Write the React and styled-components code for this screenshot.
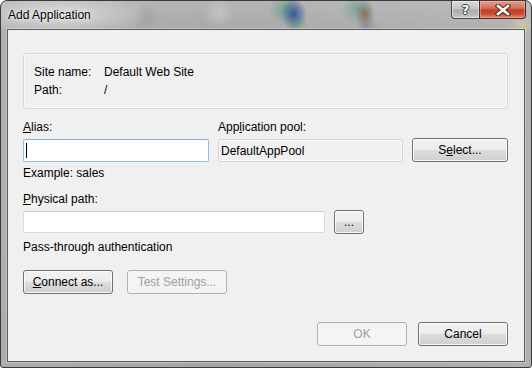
import React from 'react';
import styled, { createGlobalStyle } from 'styled-components';

const Global = createGlobalStyle`
  html, body { margin: 0; padding: 0; background: #fff; }
  body {
    font-family: "Liberation Sans", Arial, sans-serif;
    font-size: 12px;
    color: #000;
  }
  #root { width: 532px; height: 368px; }
`;

const Window = styled.div`
  box-sizing: border-box;
  width: 532px;
  height: 368px;
  display: flex;
  flex-direction: column;
  border: 1px solid #3a3a3a;
  border-radius: 7px 7px 3px 3px;
  overflow: hidden;
  background:
    radial-gradient(90px 22px at 60px 14px, rgba(255,255,255,0.55), rgba(255,255,255,0) 100%),
    radial-gradient(13px 16px at 293px 13px, rgba(30,70,150,0.8), rgba(30,70,150,0) 100%),
    radial-gradient(16px 16px at 284px 8px, rgba(60,150,110,0.55), rgba(60,150,110,0) 100%),
    radial-gradient(12px 10px at 296px 24px, rgba(90,170,90,0.4), rgba(90,170,90,0) 100%),
    radial-gradient(10px 14px at 364px 13px, rgba(120,85,55,0.65), rgba(120,85,55,0) 100%),
    radial-gradient(16px 16px at 356px 8px, rgba(60,150,130,0.45), rgba(60,150,130,0) 100%),
    radial-gradient(12px 10px at 366px 25px, rgba(80,110,150,0.35), rgba(80,110,150,0) 100%),
    radial-gradient(16px 16px at 218px 12px, rgba(225,225,225,0.4), rgba(225,225,225,0) 100%),
    radial-gradient(14px 14px at 145px 16px, rgba(135,135,135,0.3), rgba(135,135,135,0) 100%),
    radial-gradient(16px 10px at 522px 24px, rgba(230,220,150,0.45), rgba(230,220,150,0) 100%),
    linear-gradient(90deg, rgba(255,255,255,0.08), rgba(255,255,255,0) 40%, rgba(255,255,255,0.1)),
    linear-gradient(#b4b4b4, #a9a9a9 28px, #a6a6a6);
`;

const TitleBar = styled.div`
  height: 28px;
  flex: none;
  display: flex;
  align-items: flex-start;
  padding: 0 5px 0 7px;
`;

const Title = styled.div`
  padding-top: 6px;
  line-height: 16px;
  font-size: 12px;
  color: #000;
  text-shadow: 0 0 6px rgba(255,255,255,0.9), 0 0 2px rgba(255,255,255,0.7);
`;

const Spacer = styled.div`
  flex: 1;
`;

const CaptionButtons = styled.div`
  display: flex;
`;

const HelpButton = styled.div`
  box-sizing: border-box;
  width: 28px;
  height: 18px;
  display: flex;
  align-items: center;
  justify-content: center;
  border: 1px solid #4a4a4a;
  border-top: none;
  border-right: none;
  border-radius: 0 0 0 4px;
  background: linear-gradient(#d9d9d9, #c6c6c6 45%, #ababab 52%, #bcbcbc 85%, #d0d0d0);
  box-shadow: inset 0 0 0 1px rgba(255,255,255,0.45);
  color: #fff;
  font-family: "DejaVu Sans", sans-serif;
  font-weight: bold;
  font-size: 13px;
  line-height: 13px;
  text-shadow: 1px 0 0 #3c3c3c, -1px 0 0 #3c3c3c, 0 1px 0 #3c3c3c, 0 -1px 0 #3c3c3c;
`;

const CloseButton = styled.div`
  box-sizing: border-box;
  width: 47px;
  height: 18px;
  display: flex;
  align-items: center;
  justify-content: center;
  border: 1px solid #4a2b25;
  border-top: none;
  border-radius: 0 0 4px 0;
  background: linear-gradient(#e3a091, #d46f5b 42%, #c23f28 52%, #c9492f 75%, #df8a6d);
  box-shadow: inset 0 0 0 1px rgba(255,220,210,0.35);
`;

const Client = styled.div`
  flex: 1;
  display: flex;
  flex-direction: column;
  margin: 0 6px 5px 6px;
  padding: 23px 16px 15px 15px;
  border: 1px solid #5a5a5a;
  background: #f0f0f0;
  box-shadow: 0 0 0 1px rgba(255,255,255,0.3);
`;

const InfoBox = styled.div`
  box-sizing: border-box;
  height: 56px;
  padding: 9px 10px 9px 10px;
  border: 1px solid #d5d8da;
  border-radius: 3px;
  box-shadow: inset 0 0 0 1px #f9f9f9;
  display: grid;
  grid-template-columns: 70px 1fr;
  line-height: 18px;
`;

const FieldGrid = styled.div`
  margin-top: 10px;
  display: grid;
  grid-template-columns: 186px 185px 1fr;
  column-gap: 9px;
  row-gap: 3px;
  align-items: end;
`;

const Label = styled.div`
  line-height: 16px;
  margin-top: ${p => p.$mt || 0}px;
  color: ${p => (p.$disabled ? '#a0a0a0' : '#000')};
`;

const TextBox = styled.div`
  box-sizing: border-box;
  height: ${p => p.$h || 23}px;
  width: ${p => (p.$w ? `${p.$w}px` : 'auto')};
  display: flex;
  align-items: center;
  padding-left: 2px;
  border: 1px solid ${p => (p.$focused ? '#98bde3' : p.$readonly ? '#d6d6d6' : '#d8dbe0')};
  border-top-color: ${p => (p.$focused ? '#88b0dc' : p.$readonly ? '#d6d6d6' : '#c9ccd1')};
  border-radius: 2px;
  background: ${p => (p.$readonly ? '#f0f0f0' : '#fff')};
  box-shadow: ${p => (p.$readonly ? 'inset 0 0 0 1px #fafafa' : 'none')};
`;

const Caret = styled.span`
  display: block;
  width: 1px;
  height: 15px;
  background: #000;
`;

const Button = styled.div`
  box-sizing: border-box;
  width: ${p => p.$w}px;
  height: 24px;
  display: flex;
  align-items: center;
  justify-content: center;
  border: 1px solid ${p => (p.$disabled ? '#adb2b5' : '#707070')};
  border-radius: 3px;
  color: ${p => (p.$disabled ? '#a0a0a0' : '#000')};
  background: ${p =>
    p.$disabled
      ? '#f4f4f4'
      : 'linear-gradient(#f2f2f2 0%, #ebebeb 50%, #dddddd 51%, #cfcfcf 100%)'};
  box-shadow: inset 0 0 0 1px ${p => (p.$disabled ? '#f4f4f4' : 'rgba(255,255,255,0.8)')};
`;

const Row = styled.div`
  display: flex;
  align-items: center;
  gap: ${p => p.$gap || 0}px;
  margin-top: ${p => p.$mt || 0}px;
  justify-content: ${p => (p.$end ? 'flex-end' : 'flex-start')};
`;

const Footer = styled(Row)`
  margin-top: auto;
`;

export default function App() {
  return (
    <>
      <Global />
      <Window>
        <TitleBar>
          <Title>Add Application</Title>
          <Spacer />
          <CaptionButtons>
            <HelpButton>?</HelpButton>
            <CloseButton>
              <svg width="16" height="12" viewBox="0 0 16 12">
                <path d="M3 2 L13 10 M13 2 L3 10" stroke="#4a2620" strokeWidth="4.6" strokeLinecap="square" fill="none" />
                <path d="M3 2 L13 10 M13 2 L3 10" stroke="#ffffff" strokeWidth="2.6" strokeLinecap="square" fill="none" />
              </svg>
            </CloseButton>
          </CaptionButtons>
        </TitleBar>
        <Client>
          <InfoBox>
            <div>Site name:</div>
            <div>Default Web Site</div>
            <div>Path:</div>
            <div>/</div>
          </InfoBox>
          <FieldGrid>
            <Label><u>A</u>lias:</Label>
            <Label>App<u>l</u>ication pool:</Label>
            <div />
            <TextBox $focused>
              <Caret />
            </TextBox>
            <TextBox $readonly>DefaultAppPool</TextBox>
            <Button $w={96}>S<u>e</u>lect...</Button>
          </FieldGrid>
          <Label $mt={3}>Example: sales</Label>
          <Label $mt={10}><u>P</u>hysical path:</Label>
          <Row $mt={3} $gap={9}>
            <TextBox $w={302} $h={22} />
            <Button $w={30}>...</Button>
          </Row>
          <Label $mt={5}>Pass-through authentication</Label>
          <Row $mt={15} $gap={14}>
            <Button $w={90}><u>C</u>onnect as...</Button>
            <Button $w={100} $disabled>Test Settings...</Button>
          </Row>
          <Footer $end $gap={11}>
            <Button $w={90} $disabled>OK</Button>
            <Button $w={90}>Cancel</Button>
          </Footer>
        </Client>
      </Window>
    </>
  );
}
